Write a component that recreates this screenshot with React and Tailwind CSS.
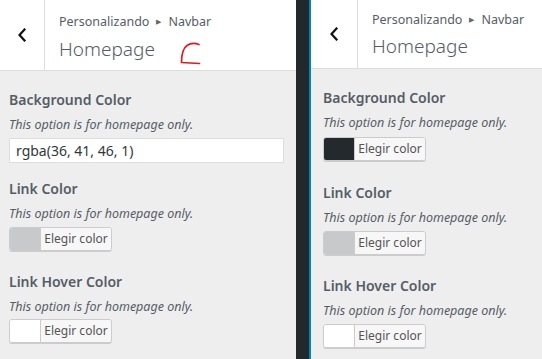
import React from 'react'

const font = { fontFamily: '"Noto Sans", "Open Sans", sans-serif' }

function Chevron() {
  return (
    <svg width="10" height="14" viewBox="0 0 10 14" fill="none">
      <path d="M7.5 1.5L2.5 7l5 5.5" stroke="#111" strokeWidth="2.2" strokeLinecap="square" />
    </svg>
  )
}

function ColorButton({ swatch }) {
  return (
    <div className="flex h-[24px] w-[103px] overflow-hidden rounded-[3px] border border-[#cccccc] shadow-[0_1px_0_#cccccc]">
      <div className={`w-[31px] border-r border-[#cccccc] ${swatch}`} />
      <div className="flex flex-1 items-center justify-center bg-[#f7f7f7] text-[12px] text-[#555555]">
        Elegir color
      </div>
    </div>
  )
}

function Label({ children }) {
  return <div className="text-[14px] leading-[20px] font-semibold text-[#555d66]">{children}</div>
}

function Desc() {
  return (
    <div className="mt-[6px] text-[12.5px] leading-[18px] italic text-[#555d66]">
      This option is for homepage only.
    </div>
  )
}

function Header({ height, pad, left, gap }) {
  return (
    <div className={`flex bg-white border-b border-[#dddddd] ${height}`}>
      <div className={`flex items-center justify-center border-r border-[#dddddd] ${left}`}>
        <Chevron />
      </div>
      <div className={`flex flex-col ${pad}`}>
        <div className="flex items-center gap-[7px] text-[12.5px] leading-[18px] text-[#555d66]">
          Personalizando
          <span className="text-[7px] text-[#666]">▶</span>
          Navbar
        </div>
        <div className={`text-[19px] leading-[26px] font-light text-[#555d66] ${gap}`}>Homepage</div>
      </div>
    </div>
  )
}

export default function App() {
  return (
    <div className="flex h-[359px] w-[542px] overflow-hidden bg-[#eeeeee]" style={font}>
      {/* left panel */}
      <div className="relative flex w-[296px] flex-col">
        <Header height="h-[71px]" pad="pl-[14px] pt-[13px]" left="w-[45px]" gap="mt-[5px]" />
        <svg className="absolute left-[178px] top-[40px]" width="26" height="28" viewBox="0 0 26 28" fill="none">
          <path d="M21 4.5C17 3 12 3.5 9 5.5C5.5 8 3.5 13 3.5 22.5L21.5 23.5" stroke="#e8161b" strokeWidth="1.7" strokeLinecap="round" strokeLinejoin="round" />
        </svg>
        <div className="flex flex-col px-[9px] pt-[19px]">
          <Label>Background Color</Label>
          <Desc />
          <div className="mt-[4px] flex h-[25px] w-[275px] items-center border border-[#dddddd] bg-white px-[6px] text-[14px] text-[#32373c]">
            rgba(36, 41, 46, 1)
          </div>
          <div className="mt-[16px]">
            <Label>Link Color</Label>
            <Desc />
            <div className="mt-[4px]">
              <ColorButton swatch="bg-[#c8c9ca]" />
            </div>
          </div>
          <div className="mt-[21px]">
            <Label>Link Hover Color</Label>
            <Desc />
            <div className="mt-[3px]">
              <ColorButton swatch="bg-white" />
            </div>
          </div>
        </div>
      </div>

      {/* divider strip */}
      <div className="w-[13px] bg-[#23282d]" />
      <div className="w-[2px] bg-[#0085ba]" />

      {/* right panel */}
      <div className="flex flex-1 flex-col">
        <Header height="h-[69px]" pad="pl-[14px] pt-[11px]" left="w-[47px]" gap="mt-[4px]" />
        <div className="flex flex-col px-[12px] pt-[19px]">
          <Label>Background Color</Label>
          <Desc />
          <div className="mt-[5px]">
            <ColorButton swatch="bg-[#24292e]" />
          </div>
          <div className="mt-[22px]">
            <Label>Link Color</Label>
            <Desc />
            <div className="mt-[4px]">
              <ColorButton swatch="bg-[#c8c9ca]" />
            </div>
          </div>
          <div className="mt-[21px]">
            <Label>Link Hover Color</Label>
            <Desc />
            <div className="mt-[4px]">
              <ColorButton swatch="bg-white" />
            </div>
          </div>
        </div>
      </div>
    </div>
  )
}
